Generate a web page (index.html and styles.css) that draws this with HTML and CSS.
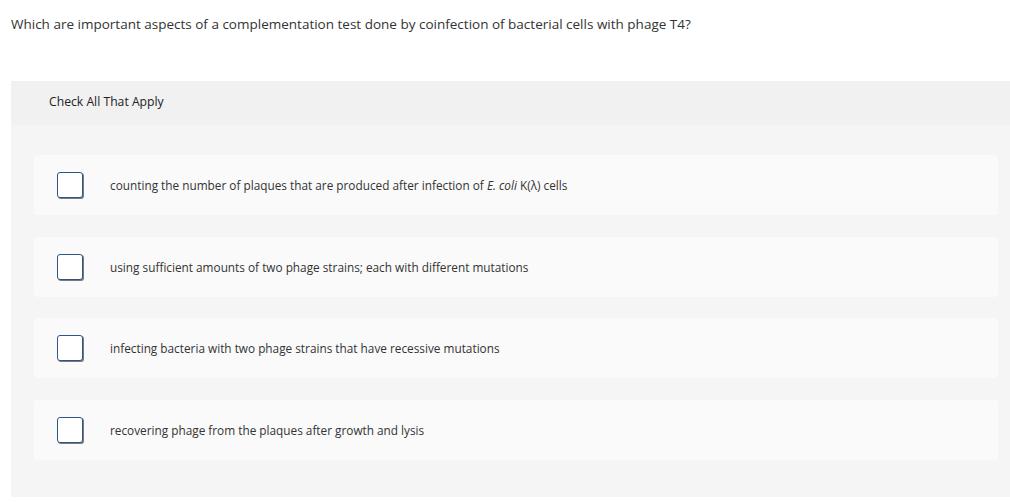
FILE: index.html
```html
<!DOCTYPE html>
<html>
<head>
<meta charset="utf-8">
<link rel="stylesheet" href="styles.css">
</head>
<body>
<div class="page">
  <p class="question">Which are important aspects of a complementation test done by coinfection of bacterial cells with phage T4?</p>
  <div class="panel">
    <div class="panel-head">Check All That Apply</div>
    <div class="panel-body">
      <div class="option"><span class="box"></span><span class="label">counting the number of plaques that are produced after infection of <i>E. coli</i> K(λ) cells</span></div>
      <div class="option"><span class="box"></span><span class="label">using sufficient amounts of two phage strains; each with different mutations</span></div>
      <div class="option"><span class="box"></span><span class="label">infecting bacteria with two phage strains that have recessive mutations</span></div>
      <div class="option"><span class="box"></span><span class="label">recovering phage from the plaques after growth and lysis</span></div>
    </div>
  </div>
</div>
</body>
</html>
```

FILE: styles.css
```css
html, body {
  margin: 0;
  padding: 0;
  background: #ffffff;
}
body {
  font-family: "Open Sans", Lato, sans-serif;
  color: #333333;
}
.page {
  padding: 0 0 0 11px;
}
.question {
  margin: 0;
  padding-top: 15px;
  font-size: 13.5px;
  line-height: 18px;
  height: 81px;
  box-sizing: border-box;
}
.panel {
  background: #f5f5f5;
}
.panel-head {
  background: #f1f1f1;
  height: 44px;
  box-sizing: border-box;
  padding: 13px 0 0 38px;
  font-size: 12.2px;
  line-height: 16px;
  color: #222;
}
.panel-body {
  padding: 30px 12px 37px 23px;
  display: flex;
  flex-direction: column;
  gap: 21.7px;
}
.option {
  background: #fafafa;
  border-radius: 4px;
  height: 60px;
  display: flex;
  align-items: center;
  padding-left: 23px;
}
.box {
  width: 24px;
  height: 24px;
  border: 1px solid #2b5686;
  border-radius: 3px;
  background: #fff;
  box-shadow: 1px 1px 0 #7a7a7a;
  flex: none;
}
.label {
  margin-left: 27px;
  font-size: 11.8px;
  color: #333;
}
```
